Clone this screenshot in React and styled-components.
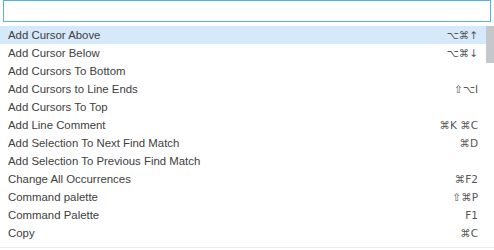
import React from 'react';
import styled, { createGlobalStyle } from 'styled-components';

const commands = [
  { label: 'Add Cursor Above', keys: '⌥⌘↑' },
  { label: 'Add Cursor Below', keys: '⌥⌘↓' },
  { label: 'Add Cursors To Bottom', keys: '' },
  { label: 'Add Cursors to Line Ends', keys: '⇧⌥I' },
  { label: 'Add Cursors To Top', keys: '' },
  { label: 'Add Line Comment', keys: '⌘K ⌘C' },
  { label: 'Add Selection To Next Find Match', keys: '⌘D' },
  { label: 'Add Selection To Previous Find Match', keys: '' },
  { label: 'Change All Occurrences', keys: '⌘F2' },
  { label: 'Command palette', keys: '⇧⌘P' },
  { label: 'Command Palette', keys: 'F1' },
  { label: 'Copy', keys: '⌘C' }
];

const Global = createGlobalStyle`
  html, body {
    margin: 0;
    padding: 0;
    background: #ffffff;
    overflow: hidden;
  }
`;

const App = () => {
  return (
    <Widget>
      <Global />
      <SearchBar>
        <SearchInput type="text" />
      </SearchBar>
      <List>
        {commands.map((cmd, i) => (
          <Row key={i} selected={i === 0}>
            <Label>{cmd.label}</Label>
            <Keys>{cmd.keys}</Keys>
          </Row>
        ))}
        <Scrollbar />
      </List>
    </Widget>
  );
};

export default App;

const Widget = styled.div`
  width: 494px;
  height: 250px;
  background: #ffffff;
  font-family: "Liberation Sans", Arial, sans-serif;
  overflow: hidden;
`;

const SearchBar = styled.div`
  padding: 0 3px;
`;

const SearchInput = styled.input`
  display: block;
  box-sizing: border-box;
  width: 100%;
  height: 22px;
  margin: 0;
  border: 1px solid #5aaee6;
  outline: none;
  background: #ffffff;
`;

const List = styled.div`
  position: relative;
  margin-top: 4px;
  height: 221px;
  border-bottom: 1px solid #ececec;
  overflow: hidden;
`;

const Row = styled.div`
  display: flex;
  align-items: center;
  justify-content: space-between;
  height: 18px;
  padding: 0 16px 0 8px;
  background: ${p => (p.selected ? '#d6e9fb' : 'transparent')};
  color: #404040;
  font-size: 11.4px;
`;

const Label = styled.span`
  white-space: nowrap;
`;

const Keys = styled.span`
  font-family: "DejaVu Sans", sans-serif;
  font-size: 10.5px;
  color: #555555;
`;

const Scrollbar = styled.div`
  position: absolute;
  top: 0;
  right: 0;
  width: 8px;
  height: 37px;
  background: #c4c8cd;
`;
